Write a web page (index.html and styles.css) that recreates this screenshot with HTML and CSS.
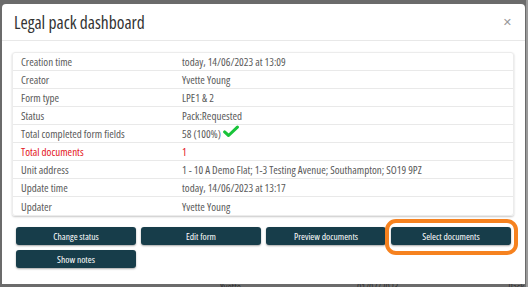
FILE: index.html
```html
<!DOCTYPE html>
<html>
<head>
<meta charset="utf-8">
<link rel="stylesheet" href="styles.css">
</head>
<body>
<div class="modal">
  <div class="modal-header">
    <h1 class="title">Legal pack dashboard</h1>
    <span class="close">&#x2715;</span>
  </div>
  <div class="modal-body">
    <div class="info">
      <div class="row"><span class="label">Creation time</span><span class="value">today, 14/06/2023 at 13:09</span></div>
      <div class="row"><span class="label">Creator</span><span class="value">Yvette Young</span></div>
      <div class="row"><span class="label">Form type</span><span class="value">LPE1 &amp; 2</span></div>
      <div class="row"><span class="label">Status</span><span class="value">Pack:Requested</span></div>
      <div class="row"><span class="label">Total completed form fields</span><span class="value">58 (100%)
        <svg class="check" viewBox="0 0 20 16" width="16" height="13"><path d="M2 8.5 L7 13 L18 2.5" fill="none" stroke="#19c43a" stroke-width="3.8" stroke-linecap="round" stroke-linejoin="round"/></svg></span></div>
      <div class="row alert"><span class="label">Total documents</span><span class="value">1</span></div>
      <div class="row"><span class="label">Unit address</span><span class="value">1 - 10 A Demo Flat; 1-3 Testing Avenue; Southampton; SO19 9PZ</span></div>
      <div class="row"><span class="label">Update time</span><span class="value">today, 14/06/2023 at 13:17</span></div>
      <div class="row"><span class="label">Updater</span><span class="value">Yvette Young</span></div>
    </div>
    <div class="actions">
      <button class="btn">Change status</button>
      <button class="btn">Edit form</button>
      <button class="btn">Preview documents</button>
      <button class="btn highlighted">Select documents</button>
      <button class="btn">Show notes</button>
    </div>
  </div>
</div>
<div class="behind">
  <span class="b1">Yvette Young</span>
  <span class="b2">01/07/2023</span>
  <span class="b3">Pack R</span>
</div>
</body>
</html>
```

FILE: styles.css
```css
html, body {
  margin: 0;
  padding: 0;
}
body {
  background: #6b6b6b;
  font-family: "Open Sans", sans-serif;
  font-stretch: 87.5%;
  width: 528px;
  height: 287px;
  overflow: hidden;
  padding-top: 4px;
  padding-left: 2px;
  box-sizing: border-box;
  position: relative;
}
body::after {
  content: "";
  position: absolute;
  right: 0;
  top: 0;
  width: 2px;
  height: 100%;
  background: #9a9a9a;
}
.modal {
  width: 523px;
  height: 280px;
  background: #fff;
  border-radius: 4px 4px 0 0;
  box-sizing: border-box;
}
.modal-header {
  height: 36px;
  border-bottom: 1px solid #e8e8e8;
  display: flex;
  align-items: center;
  justify-content: space-between;
  padding: 0 13px 0 12px;
}
.title {
  margin: 0 0 1px 0;
  font-size: 17.5px;
  font-weight: 400;
  color: #333;
}
.close {
  font-family: "DejaVu Sans", sans-serif;
  font-stretch: normal;
  font-size: 11px;
  color: #999;
}
.modal-body {
  padding: 11px 11px 0 10px;
}
.info {
  border: 1px solid #ececec;
  border-radius: 3px;
  box-shadow: 0 1px 2px rgba(0,0,0,0.22);
}
.row {
  display: flex;
  align-items: center;
  height: 18px;
  border-bottom: 1px solid #e9e9e9;
  font-size: 11px;
  color: #5a5a5a;
  padding-left: 8px;
  box-sizing: border-box;
}
.row:last-child {
  border-bottom: none;
}
.label {
  width: 161px;
  flex: none;
}
.value {
  display: flex;
  align-items: center;
  gap: 2px;
}
.check {
  margin-top: -4px;
}
.row.alert {
  color: #e4141b;
}
.actions {
  display: grid;
  grid-template-columns: repeat(4, 120px);
  column-gap: 5px;
  row-gap: 5px;
  margin: 11px 0 0 4px;
}
.btn {
  height: 18px;
  background: #173d4a;
  color: #fff;
  border: none;
  border-radius: 3px;
  font-family: "Open Sans", sans-serif;
  font-stretch: 87.5%;
  font-size: 9.5px;
  padding: 0;
  box-shadow: 0 1px 2px rgba(0,0,0,0.35);
}
.highlighted {
  position: relative;
}
.highlighted::after {
  content: "";
  position: absolute;
  left: -6px;
  right: -7px;
  top: -8px;
  bottom: -10px;
  border: 4px solid #f6821f;
  border-radius: 11px;
}
.behind {
  height: 3px;
  overflow: hidden;
  display: flex;
  font-size: 10px;
  color: #333;
  line-height: 10px;
  align-items: flex-start;
}
.behind span {
  transform: translateY(-2px);
}
.b1 { margin-left: 218px; }
.b2 { margin-left: 98px; }
.b3 { margin-left: 110px; }
```
